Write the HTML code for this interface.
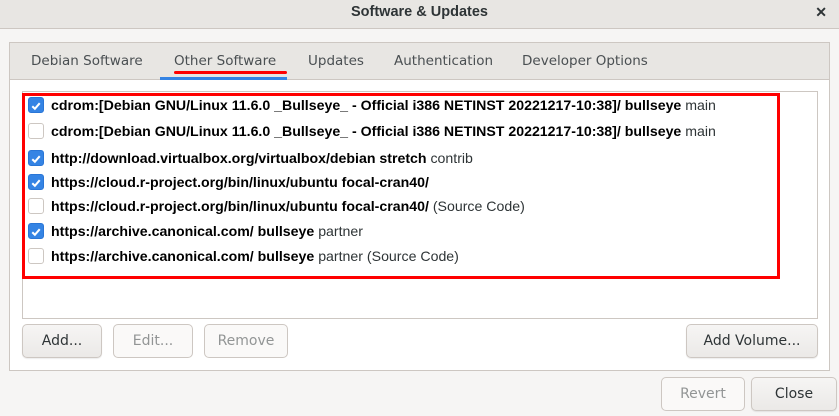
<!DOCTYPE html>
<html><head><style>
*{box-sizing:border-box}
body{margin:0;width:839px;height:416px;background:#f6f5f4;font-family:"DejaVu Sans","Liberation Sans",sans-serif;font-size:13.5px;color:#2e3436;position:relative;overflow:hidden}
.title{position:absolute;left:0;top:0;width:839px;height:29px;background:#e8e6e3;border-bottom:1px solid #cdc7c2;text-align:center;font-weight:bold;line-height:24px;font-size:14.5px;font-family:"Liberation Sans",sans-serif}
.x{position:absolute;right:12px;top:0;font-weight:bold;font-size:14px;line-height:24px}
.nb{position:absolute;left:9px;top:42px;width:821px;height:329px;border:1px solid #cdc7c2;background:#fff}
.tabs{position:absolute;left:0;top:0;width:819px;height:37px;background:#e8e6e3;border-bottom:1px solid #cdc7c2}
.tab{position:absolute;top:10px;color:#4a4f52}
.ul{position:absolute;left:150px;top:34px;width:127px;height:3px;background:#3584e4}
.red1{position:absolute;left:164px;top:28px;width:113px;height:3px;background:#f00;border-radius:2px}
.list{position:absolute;left:22px;top:91px;width:796px;height:228px;border:1px solid #cdc7c2;background:#fff}
.redbox{position:absolute;left:22px;top:93px;width:758px;height:186px;border:3px solid #f00}
.row{position:absolute;left:28px;height:20px;line-height:20px;white-space:nowrap;font-size:14.15px;font-family:"Liberation Sans",sans-serif}
.cb{position:absolute;left:0;top:2px;width:16px;height:16px;border:1px solid #cdc7c2;border-radius:3px;background:#fff}
.cb.on{background:#3584e4;border-color:#2a76d6}
.row span.t{position:absolute;left:23px;top:0}
b{font-weight:bold;color:#000}
.btn{position:absolute;height:34px;border:1px solid #cdc7c2;border-radius:5px;background:linear-gradient(#f6f5f4,#ebe9e7);text-align:center;line-height:32px;font-size:14px;box-shadow:0 1px 1px rgba(0,0,0,.08)}
.dis{color:#929595;background:#faf9f8;box-shadow:none}
</style></head><body>
<div class="title">Software &amp; Updates<span class="x">✕</span></div>
<div class="nb">
<div class="tabs">
<span class="tab" style="left:21px">Debian Software</span>
<span class="tab" style="left:164px">Other Software</span>
<span class="tab" style="left:298px">Updates</span>
<span class="tab" style="left:384px">Authentication</span>
<span class="tab" style="left:512px">Developer Options</span>
<div class="red1"></div><div class="ul"></div>
</div>
</div>
<div class="list"></div>
<div class="redbox"></div>
<svg width="0" height="0" style="position:absolute"><defs><symbol id="ck" viewBox="0 0 15 15"><path d="M3.5 7.8 L6.3 10.5 L11.5 4.5" stroke="#fff" stroke-width="2.2" fill="none"/></symbol></defs></svg>
<div class="row" style="top:95px"><div class="cb on"><svg width="14" height="14" viewBox="0 0 15 15"><use href="#ck"/></svg></div><span class="t"><b>cdrom:[Debian GNU/Linux 11.6.0 _Bullseye_ - Official i386 NETINST 20221217-10:38]/ bullseye</b> main</span></div>
<div class="row" style="top:121px"><div class="cb"></div><span class="t"><b>cdrom:[Debian GNU/Linux 11.6.0 _Bullseye_ - Official i386 NETINST 20221217-10:38]/ bullseye</b> main</span></div>
<div class="row" style="top:148px"><div class="cb on"><svg width="14" height="14" viewBox="0 0 15 15"><use href="#ck"/></svg></div><span class="t"><b>http://download.virtualbox.org/virtualbox/debian stretch</b> contrib</span></div>
<div class="row" style="top:172px"><div class="cb on"><svg width="14" height="14" viewBox="0 0 15 15"><use href="#ck"/></svg></div><span class="t"><b>https://cloud.r-project.org/bin/linux/ubuntu focal-cran40/</b></span></div>
<div class="row" style="top:196px"><div class="cb"></div><span class="t"><b>https://cloud.r-project.org/bin/linux/ubuntu focal-cran40/</b> (Source Code)</span></div>
<div class="row" style="top:221px"><div class="cb on"><svg width="14" height="14" viewBox="0 0 15 15"><use href="#ck"/></svg></div><span class="t"><b>https://archive.canonical.com/ bullseye</b> partner</span></div>
<div class="row" style="top:246px"><div class="cb"></div><span class="t"><b>https://archive.canonical.com/ bullseye</b> partner (Source Code)</span></div>
<div class="btn" style="left:22px;top:324px;width:80px">Add...</div>
<div class="btn dis" style="left:113px;top:324px;width:80px">Edit...</div>
<div class="btn dis" style="left:204px;top:324px;width:84px">Remove</div>
<div class="btn" style="left:686px;top:324px;width:132px">Add Volume...</div>
<div class="btn dis" style="left:661px;top:377px;width:84px">Revert</div>
<div class="btn" style="left:751px;top:377px;width:86px">Close</div>
</body></html>
